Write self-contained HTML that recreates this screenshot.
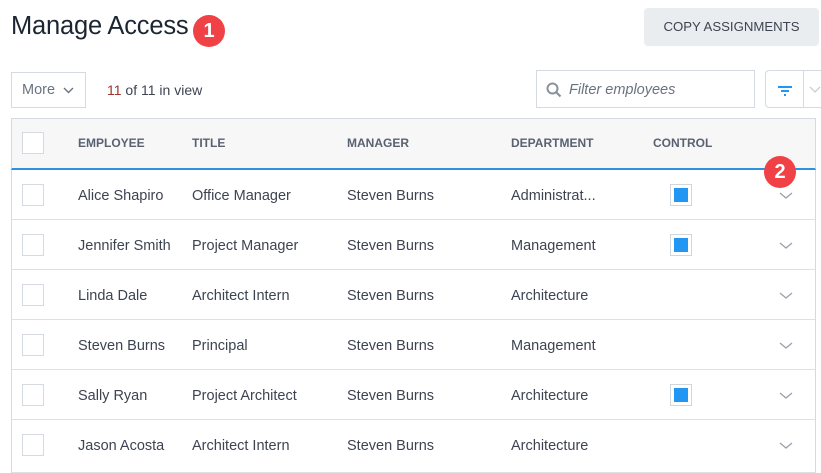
<!DOCTYPE html>
<html><head><style>
*{box-sizing:border-box;margin:0;padding:0}
html,body{width:821px;height:473px;overflow:hidden}
body{background:#fff;font-family:"Liberation Sans",sans-serif;color:#3d4451;position:relative}
.a{position:absolute}
h1{position:absolute;left:11px;top:12px;font-size:25.5px;font-weight:normal;color:#1c2633;letter-spacing:-0.2px}
.badge{position:absolute;border-radius:50%;background:#ef4146;color:#fff;font-weight:bold;font-size:20px;text-align:center}
.btn{left:644px;top:8px;width:175px;height:38px;background:#eaedf0;border-radius:4px;font-size:13.2px;line-height:38px;text-align:center;color:#3d4451}
.box{border:1px solid #d5dae0;background:#fff}
.cb{position:absolute;left:22px;width:22px;height:22px;border:1px solid #d5dae0;background:#fff}
.row{position:absolute;left:11px;width:805px;height:50px;border-left:1px solid #d5dae0;border-right:1px solid #d5dae0;border-bottom:1px solid #dde1e6;font-size:14.5px}
.row span{position:absolute;top:18px;color:#3d4451}
.hd span{position:absolute;top:17px;font-size:12px;font-weight:bold;color:#5a6270}
.ctl{position:absolute;left:658px;top:14px;width:22px;height:22px;border:1px solid #cfd6de;background:#fff}
.ctl::after{content:"";position:absolute;left:3px;top:3px;width:14px;height:14px;background:#2196f3}
.chev{position:absolute;left:767px;top:21px;width:14px;height:10px}
</style></head><body>
<h1>Manage Access</h1>
<div class="badge" style="left:193px;top:15px;width:32px;height:32px;line-height:32px">1</div>
<div class="a btn">COPY ASSIGNMENTS</div>
<div class="a box" style="left:11px;top:72px;width:75px;height:36px;font-size:14.5px;color:#6b7380;line-height:34px;padding-left:10px">More <svg width="11" height="7" style="margin-left:4px"><path d="M1 1l4.5 4.5L10 1" stroke="#6b7380" stroke-width="1.4" fill="none"/></svg></div>
<div class="a" style="left:107px;top:82px;font-size:14px;color:#3d4451"><span style="color:#a0342f">11</span> of 11 in view</div>
<div class="a box" style="left:536px;top:70px;width:219px;height:38px;font-size:14.5px;color:#6b7380;font-style:italic;line-height:38px;padding-left:32px">Filter employees
<svg class="a" style="left:9px;top:11px" width="16" height="16"><circle cx="6.5" cy="6.5" r="5" stroke="#8a929c" stroke-width="2" fill="none"/><path d="M10 10l4.5 4.5" stroke="#8a929c" stroke-width="2.2"/></svg></div>
<div class="a box" style="left:765px;top:70px;width:70px;height:38px;border-radius:4px">
<svg class="a" style="left:11px;top:14px" width="16" height="12"><path d="M1 2h14M4 6h8M7 10h2" stroke="#2196f3" stroke-width="2"/></svg>
<div class="a" style="left:37px;top:0;width:1px;height:36px;background:#d5dae0"></div>
<svg class="a" style="left:43px;top:15px" width="12" height="7"><path d="M1 1l5 5 5-5" stroke="#c8ced6" stroke-width="1.3" fill="none"/></svg>
</div>
<div class="row hd" style="top:118px;height:52px;background:#f7f7f8;border-top:1px solid #d5dae0;border-bottom:2px solid #2d93e0">
<div class="cb" style="left:10px;top:13px"></div>
<span style="left:66px">EMPLOYEE</span><span style="left:180px">TITLE</span><span style="left:335px">MANAGER</span><span style="left:499px">DEPARTMENT</span><span style="left:641px">CONTROL</span>
</div>
<div class="row" style="top:170px"><div class="cb" style="left:10px;top:14px"></div><span style="left:66px">Alice Shapiro</span><span style="left:180px">Office Manager</span><span style="left:335px">Steven Burns</span><span style="left:499px">Administrat...</span><div class="ctl"></div><svg class="chev" viewBox="0 0 14 10"><path d="M1 2l6 5 6-5" stroke="#9aa1aa" stroke-width="1.3" fill="none"/></svg></div>
<div class="row" style="top:220px"><div class="cb" style="left:10px;top:14px"></div><span style="left:66px">Jennifer Smith</span><span style="left:180px">Project Manager</span><span style="left:335px">Steven Burns</span><span style="left:499px">Management</span><div class="ctl"></div><svg class="chev" viewBox="0 0 14 10"><path d="M1 2l6 5 6-5" stroke="#9aa1aa" stroke-width="1.3" fill="none"/></svg></div>
<div class="row" style="top:270px"><div class="cb" style="left:10px;top:14px"></div><span style="left:66px">Linda Dale</span><span style="left:180px">Architect Intern</span><span style="left:335px">Steven Burns</span><span style="left:499px">Architecture</span><svg class="chev" viewBox="0 0 14 10"><path d="M1 2l6 5 6-5" stroke="#9aa1aa" stroke-width="1.3" fill="none"/></svg></div>
<div class="row" style="top:320px"><div class="cb" style="left:10px;top:14px"></div><span style="left:66px">Steven Burns</span><span style="left:180px">Principal</span><span style="left:335px">Steven Burns</span><span style="left:499px">Management</span><svg class="chev" viewBox="0 0 14 10"><path d="M1 2l6 5 6-5" stroke="#9aa1aa" stroke-width="1.3" fill="none"/></svg></div>
<div class="row" style="top:370px"><div class="cb" style="left:10px;top:14px"></div><span style="left:66px">Sally Ryan</span><span style="left:180px">Project Architect</span><span style="left:335px">Steven Burns</span><span style="left:499px">Architecture</span><div class="ctl"></div><svg class="chev" viewBox="0 0 14 10"><path d="M1 2l6 5 6-5" stroke="#9aa1aa" stroke-width="1.3" fill="none"/></svg></div>
<div class="row" style="top:420px;height:53px"><div class="cb" style="left:10px;top:14px"></div><span style="left:66px">Jason Acosta</span><span style="left:180px">Architect Intern</span><span style="left:335px">Steven Burns</span><span style="left:499px">Architecture</span><svg class="chev" viewBox="0 0 14 10"><path d="M1 2l6 5 6-5" stroke="#9aa1aa" stroke-width="1.3" fill="none"/></svg></div>
<div class="badge" style="left:764px;top:156px;width:32px;height:32px;line-height:32px">2</div>
</body></html>
